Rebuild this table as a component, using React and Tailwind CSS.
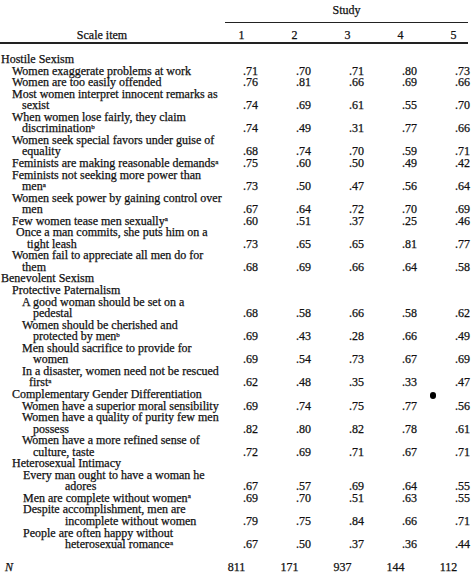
import React from "react";

const A = () => <sup className="text-[7px]">a</sup>;
const B = () => <sup className="text-[7px]">b</sup>;

const rows = [
  { type: "h", text: "Hostile Sexism", cls: "pl-[1px]" },
  { lines: ["Women exaggerate problems at work"], p: ["pl-[12px]"], v: [".71", ".70", ".71", ".80", ".73"] },
  { lines: ["Women are too easily offended"], p: ["pl-[12px]"], v: [".76", ".81", ".66", ".69", ".66"] },
  { lines: ["Most women interpret innocent remarks as", "sexist"], p: ["pl-[12px]", "pl-[22px]"], v: [".74", ".69", ".61", ".55", ".70"] },
  { lines: ["When women lose fairly, they claim", <>discrimination<B /></>], p: ["pl-[12px]", "pl-[22px]"], v: [".74", ".49", ".31", ".77", ".66"] },
  { lines: ["Women seek special favors under guise of", "equality"], p: ["pl-[12px]", "pl-[22px]"], v: [".68", ".74", ".70", ".59", ".71"] },
  { lines: [<>Feminists are making reasonable demands<A /></>], p: ["pl-[12px]"], v: [".75", ".60", ".50", ".49", ".42"] },
  { lines: ["Feminists not seeking more power than", <>men<A /></>], p: ["pl-[12px]", "pl-[22px]"], v: [".73", ".50", ".47", ".56", ".64"] },
  { lines: ["Women seek power by gaining control over", "men"], p: ["pl-[12px]", "pl-[22px]"], v: [".67", ".64", ".72", ".70", ".69"] },
  { lines: [<>Few women tease men sexually<A /></>], p: ["pl-[12px]"], v: [".60", ".51", ".37", ".25", ".46"] },
  { lines: ["Once a man commits, she puts him on a", "tight leash"], p: ["pl-[16px]", "pl-[27px]"], v: [".73", ".65", ".65", ".81", ".77"] },
  { lines: ["Women fail to appreciate all men do for", "them"], p: ["pl-[12px]", "pl-[22px]"], v: [".68", ".69", ".66", ".64", ".58"] },
  { type: "h", text: "Benevolent Sexism", cls: "pl-[1px]" },
  { type: "h", text: "Protective Paternalism", cls: "pl-[12px]" },
  { lines: ["A good woman should be set on a", "pedestal"], p: ["pl-[22px]", "pl-[33px]"], v: [".68", ".58", ".66", ".58", ".62"] },
  { lines: ["Women should be cherished and", <>protected by men<B /></>], p: ["pl-[22px]", "pl-[33px]"], v: [".69", ".43", ".28", ".66", ".49"] },
  { lines: ["Men should sacrifice to provide for", "women"], p: ["pl-[22px]", "pl-[33px]"], v: [".69", ".54", ".73", ".67", ".69"] },
  { lines: ["In a disaster, women need not be rescued", <>first<A /></>], p: ["pl-[22px]", "pl-[29px]"], v: [".62", ".48", ".35", ".33", ".47"] },
  { type: "h", text: "Complementary Gender Differentiation", cls: "pl-[12px]" },
  { lines: ["Women have a superior moral sensibility"], p: ["pl-[22px]"], v: [".69", ".74", ".75", ".77", ".56"] },
  { lines: ["Women have a quality of purity few men", "possess"], p: ["pl-[22px]", "pl-[33px]"], v: [".82", ".80", ".82", ".78", ".61"] },
  { lines: ["Women have a more refined sense of", "culture, taste"], p: ["pl-[22px]", "pl-[33px]"], v: [".72", ".69", ".71", ".67", ".71"] },
  { type: "h", text: "Heterosexual Intimacy", cls: "pl-[12px]" },
  { lines: ["Every man ought to have a woman he", "adores"], p: ["pl-[23px]", "pl-[65px]"], v: [".67", ".57", ".69", ".64", ".55"] },
  { lines: [<>Men are complete without women<A /></>], p: ["pl-[23px]"], v: [".69", ".70", ".51", ".63", ".55"] },
  { lines: ["Despite accomplishment, men are", "incomplete without women"], p: ["pl-[23px]", "pl-[65px]"], v: [".79", ".75", ".84", ".66", ".71"] },
  { lines: ["People are often happy without", <>heterosexual romance<A /></>], p: ["pl-[23px]", "pl-[65px]"], v: [".67", ".50", ".37", ".36", ".44"] },
];

export default function App() {
  return (
    <div
      className="relative w-[474px] h-[576px] overflow-hidden bg-white text-[#111111] text-[12px] leading-[11.55px] whitespace-nowrap [-webkit-text-stroke:0.25px_#111111]"
      style={{ fontFamily: '"Liberation Serif", "Times New Roman", serif' }}
    >
      <div className="pt-[5px]">
        <div className="ml-[225px] w-[243px] text-center">Study</div>
        <div className="mt-[5px] ml-[225px] w-[243px] h-[1px] bg-[#222222]" />
        <div className="mt-[7px] flex">
          <div className="w-[204px] shrink-0 text-center">Scale item</div>
          <div className="w-[20px] shrink-0" />
          {["1", "2", "3", "4", "5"].map((h) => (
            <div key={h} className="w-[53px] shrink-0 pr-[18px] text-center">
              {h}
            </div>
          ))}
        </div>
        <div className="mt-[1px] w-[468px] h-[2px] bg-[#222222]" />
        <div className="mt-[10px] flex flex-col">
          {rows.map((r, i) =>
            r.type === "h" ? (
              <div key={i} className={r.cls}>
                {r.text}
              </div>
            ) : (
              <div key={i} className="flex items-end">
                <div className="w-[224px] shrink-0">
                  {r.lines.map((l, j) => (
                    <div key={j} className={r.p[j]}>
                      {l}
                    </div>
                  ))}
                </div>
                {r.v.map((v, k) => (
                  <div key={k} className="w-[53px] shrink-0 text-center">
                    {v}
                  </div>
                ))}
              </div>
            )
          )}
        </div>
        <div className="mt-[11.5px] flex">
          <div className="w-[224px] shrink-0 pl-[5px] italic">N</div>
          {["811", "171", "937", "144", "112"].map((n) => (
            <div key={n} className="w-[53px] shrink-0 pr-[28px] text-center">
              {n}
            </div>
          ))}
        </div>
      </div>
      <span className="absolute left-[430px] top-[392px] w-[6px] h-[7px] rounded-full bg-black" />
    </div>
  );
}
